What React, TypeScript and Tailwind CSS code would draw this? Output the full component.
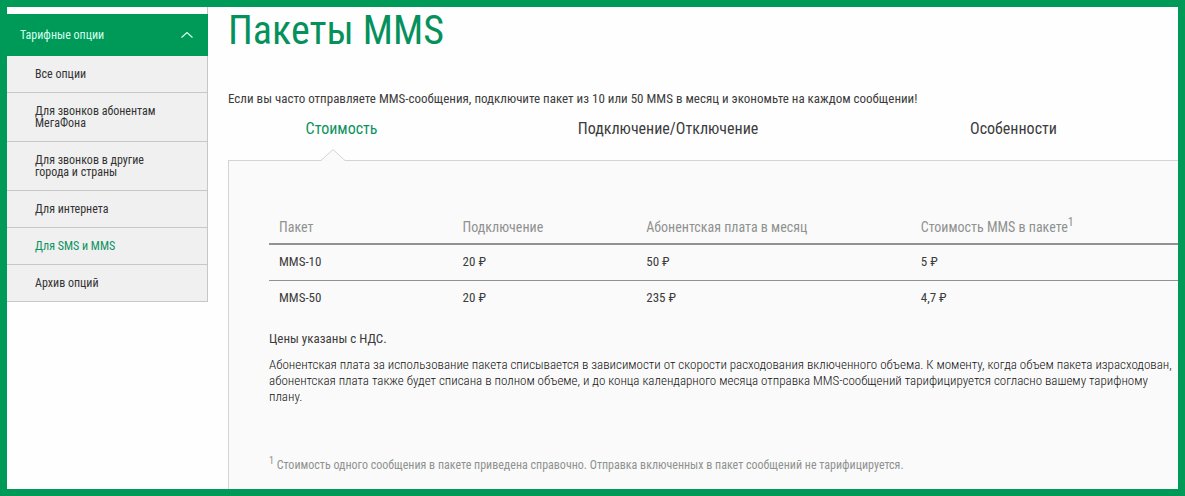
import { useState } from "react";

const menuItems = [
  { title: "Все опции" },
  { title: "Для звонков абонентам МегаФона" },
  { title: "Для звонков в другие города и страны" },
  { title: "Для интернета" },
  { title: "Для SMS и MMS", active: true },
  { title: "Архив опций" },
];

const tabs = ["Стоимость", "Подключение/Отключение", "Особенности"];

const packages = [
  { name: "MMS-10", connect: "20 ₽", monthly: "50 ₽", price: "5 ₽" },
  { name: "MMS-50", connect: "20 ₽", monthly: "235 ₽", price: "4,7 ₽" },
];

function Sidebar() {
  const [open, setOpen] = useState(true);

  return (
    <aside className="w-[201px] shrink-0">
      <div className="h-[7px] border-r border-[#c4c8c6]" />
      <button
        type="button"
        aria-expanded={open}
        onClick={() => setOpen(!open)}
        className="flex h-[42px] w-full items-center justify-between bg-[#009a58] pr-[14px] pl-[13px] text-[12px] text-[#d5fff0]"
      >
        Тарифные опции
        <svg className={open ? "" : "rotate-180"} width="14" height="8" viewBox="0 0 14 8" fill="none" stroke="currentColor" strokeWidth="1.2">
          <path d="M1.5 6.5 7 1.5l5.500 5" />
        </svg>
      </button>
      {open && (
        <ul className="border-r border-[#c4c8c6] bg-[#f0f0f0]">
          {menuItems.map((item) => (
            <li key={item.title} className="border-b border-[#c4c8c6]">
              <a
                href="#"
                className={`block py-3 pr-11 pl-7 text-[12px] leading-3 ${item.active ? "text-[#0c9362]" : "text-[#333]"}`}
              >
                {item.title}
              </a>
            </li>
          ))}
        </ul>
      )}
    </aside>
  );
}

function PriceTable() {
  return (
    <table className="w-full table-fixed text-left text-[13px] leading-4 text-[#3c3c3c]">
      <thead className="text-[14px]">
        <tr className="border-b-2 border-[#8f9491] text-[#8f9290]">
          <th className="w-[20.2%] px-[10px] pb-2 font-normal">Пакет</th>
          <th className="w-[20.2%] px-[10px] pb-2 font-normal">Подключение</th>
          <th className="w-[30.2%] px-[10px] pb-2 font-normal">Абонентская плата в месяц</th>
          <th className="px-[10px] pb-2 font-normal">
            Стоимость MMS в пакете<sup className="text-[12px]">1</sup>
          </th>
        </tr>
      </thead>
      <tbody>
        {packages.map((item) => (
          <tr key={item.name} className="h-9 border-b border-[#8f9491] last:border-b-0">
            <td className="px-[10px]">{item.name}</td>
            <td className="px-[10px]">{item.connect}</td>
            <td className="px-[10px]">{item.monthly}</td>
            <td className="px-[10px]">{item.price}</td>
          </tr>
        ))}
      </tbody>
    </table>
  );
}

export default function App() {
  const [tab, setTab] = useState(tabs[0]);

  return (
    <div className="flex min-h-screen border-[7px] border-[#009a58] bg-[#fefefe] font-['Roboto_Condensed',Roboto,'Liberation_Sans',sans-serif] text-[#3c3c3c]">
      <Sidebar />
      <main className="ml-5 flex min-w-0 flex-1 flex-col">
        <h1 className="h-[84px] text-[40px] leading-[48px] text-[#04915b]">Пакеты MMS</h1>
        <p className="text-[13px] leading-4">
          Если вы часто отправляете MMS-сообщения, подключите пакет из 10 или 50 MMS в месяц и экономьте на каждом сообщении!
        </p>
        <div role="tablist" className="mt-3 grid h-[41px] grid-cols-[24fr_45fr_28fr] items-start justify-items-center pr-8">
          {tabs.map((name) => (
            <button
              key={name}
              type="button"
              role="tab"
              aria-selected={tab === name}
              onClick={() => setTab(name)}
              className={`text-[16px] leading-5 ${tab === name ? "text-[#0c9362]" : "text-[#3c3c3c]"}`}
            >
              {name}
            </button>
          ))}
        </div>
        <section className="relative flex-1 border-t border-l border-[#d4d4d4] bg-[#fafafa] pt-[58px] pl-10">
          <svg className="absolute -top-3 left-[91px]" width="26" height="13" viewBox="0 0 26 13">
            <path d="M0 12.500 1 11.500 13 .5 25 11.500 26 12.500z" fill="#fafafa" />
            <path d="M0 11.500h1L13 .500l12 11h1" fill="none" stroke="#d4d4d4" />
          </svg>
          <PriceTable />
          <div className="text-[13px] leading-4">
            <p className="mt-[15px]">Цены указаны с НДС.</p>
            <p className="mt-[10px] font-light text-[#111]">
              Абонентская плата за использование пакета списывается в зависимости от скорости расходования включенного объема. К моменту, когда объем пакета израсходован, абонентская плата также будет списана в полном объеме, и до конца календарного месяца отправка MMS-сообщений тарифицируется согласно вашему тарифному плану.
            </p>
            <p className="mt-[52px] text-[12px] text-[#8f9290]">
              <sup className="text-[10px]">1</sup> Стоимость одного сообщения в пакете приведена справочно. Отправка включенных в пакет сообщений не тарифицируется.
            </p>
          </div>
        </section>
      </main>
    </div>
  );
}
